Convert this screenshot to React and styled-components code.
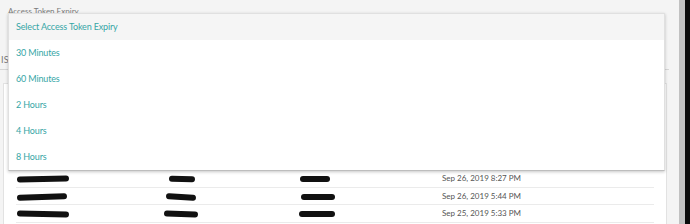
import React from 'react';
import styled, { createGlobalStyle } from 'styled-components';

const GlobalStyle = createGlobalStyle`
  html, body {
    margin: 0;
    padding: 0;
    background: #f4f4f4;
    font-family: Lato, "Open Sans", sans-serif;
  }
`;

const Page = styled.div`
  display: flex;
  width: 690px;
  height: 224px;
  overflow: hidden;
`;

const Main = styled.div`
  position: relative;
  flex: 1;
  display: flex;
  flex-direction: column;
  background: #f4f4f4;
`;

const TopBar = styled.div`
  height: 2px;
  background: #1b84c9;
`;

const Content = styled.div`
  display: flex;
  flex-direction: column;
`;

const FieldLabel = styled.div`
  padding: 6px 0 0 8px;
  height: 10px;
  font-size: 8px;
  line-height: 10px;
  color: #7a7a7a;
`;

const Tabs = styled.div`
  margin-top: 33px;
  width: 669px;
  height: 20px;
  border-bottom: 1px solid #d6d6d6;
  display: flex;
  align-items: center;
`;

const Tab = styled.span`
  font-size: 9px;
  color: #777;
  padding-left: 1px;
  letter-spacing: 0.2px;
`;

const Card = styled.div`
  margin: 13px 0 0 3px;
  width: 664px;
  height: 200px;
  background: #fff;
  border: 1px solid #e2e2e2;
  padding-top: 86px;
  box-sizing: border-box;
`;

const Row = styled.div`
  display: grid;
  grid-template-columns: 144px 138px 143px 1fr;
  align-items: center;
  height: 16.5px;
  margin: 0 12px;
  padding-left: 1px;
  border-bottom: 1px solid #ebebeb;
  font-size: 8px;
  color: #555;
`;

const Cell = styled.div`
  white-space: nowrap;
  padding-left: ${(p) => p.$indent || 0}px;
`;

const Redact = styled.span`
  display: inline-block;
  width: ${(p) => p.$w}px;
  height: 6px;
  border-radius: 3px;
  background: #111;
  transform: rotate(${(p) => p.$rot || 0}deg);
  vertical-align: middle;
`;

const Menu = styled.ul`
  position: absolute;
  top: 13px;
  left: 8px;
  width: 655px;
  margin: 0;
  padding: 0;
  list-style: none;
  background: #fff;
  border: 1px solid #e0e0e0;
  border-bottom-color: #bdbdbd;
  box-shadow: 0 1px 3px rgba(0, 0, 0, 0.22);
`;

const MenuItem = styled.li`
  height: 26px;
  display: flex;
  align-items: center;
  padding-left: 7px;
  padding-bottom: 1px;
  box-sizing: border-box;
  font-size: 9px;
  letter-spacing: -0.15px;
  color: #36a6a6;
  background: ${(p) => (p.$placeholder ? '#f5f5f5' : '#fff')};
`;

const Scrollbar = styled.div`
  display: flex;
  width: 11px;
`;

const Thumb = styled.div`
  width: 6px;
  background: #c1c1c1;
`;

const Edge = styled.div`
  flex: 1;
  background: #0a0a0a;
`;

const options = ['30 Minutes', '60 Minutes', '2 Hours', '4 Hours', '8 Hours'];

const rows = [
  { a: [52, -1], b: [26, 1], b2: 4, c: [30, 0], date: 'Sep 26, 2019 8:27 PM' },
  { a: [50, -2], b: [30, 4], b2: 1, c: [34, 1], date: 'Sep 26, 2019 5:44 PM' },
  { a: [52, 1], b: [34, 2], b2: -1, c: [36, -1], date: 'Sep 25, 2019 5:33 PM' },
];

export default function App() {
  return (
    <Page>
      <GlobalStyle />
      <Main>
        <TopBar />
        <Content>
          <FieldLabel>Access Token Expiry</FieldLabel>
          <Tabs>
            <Tab>ISSUED TOKENS</Tab>
          </Tabs>
          <Card>
            {rows.map((r) => (
              <Row key={r.date}>
                <Cell>
                  <Redact $w={r.a[0]} $rot={r.a[1]} />
                </Cell>
                <Cell $indent={4 + r.b2}>
                  <Redact $w={r.b[0]} $rot={r.b[1]} />
                </Cell>
                <Cell $indent={r.c[1] + 1}>
                  <Redact $w={r.c[0]} $rot={0} />
                </Cell>
                <Cell>{r.date}</Cell>
              </Row>
            ))}
          </Card>
        </Content>
        <Menu>
          <MenuItem $placeholder>Select Access Token Expiry</MenuItem>
          {options.map((o) => (
            <MenuItem key={o}>{o}</MenuItem>
          ))}
        </Menu>
      </Main>
      <Scrollbar>
        <Thumb />
        <Edge />
      </Scrollbar>
    </Page>
  );
}
